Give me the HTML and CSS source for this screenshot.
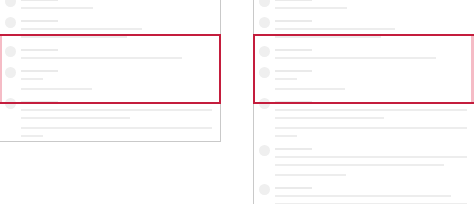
FILE: index.html
```html
<!DOCTYPE html>
<html>
<head>
<meta charset="utf-8">
<link rel="stylesheet" href="styles.css">
</head>
<body>
<div class="stage">
  <div class="panel panel-left">
    <div class="list">
      <div class="item"><div class="avatar"></div><div class="text">
        <div class="ln title"></div><div class="ln" style="width:72px"></div></div></div>
      <div class="item"><div class="avatar"></div><div class="text">
        <div class="ln title"></div><div class="ln" style="width:121px"></div><div class="ln" style="width:106px"></div></div></div>
      <div class="item"><div class="avatar"></div><div class="text">
        <div class="ln title"></div><div class="ln" style="width:161px"></div></div></div>
      <div class="item"><div class="avatar"></div><div class="text">
        <div class="ln title"></div><div class="ln" style="width:22px"></div><div class="ln para" style="width:71px"></div></div></div>
      <div class="item"><div class="avatar"></div><div class="text">
        <div class="ln title"></div><div class="ln" style="width:191px"></div><div class="ln" style="width:109px"></div><div class="ln para" style="width:191px"></div><div class="ln" style="width:22px"></div></div></div>
    </div>
    <div class="focus focus-left"></div>
  </div>
  <div class="panel panel-right">
    <div class="list">
      <div class="item"><div class="avatar"></div><div class="text">
        <div class="ln title"></div><div class="ln" style="width:72px"></div></div></div>
      <div class="item"><div class="avatar"></div><div class="text">
        <div class="ln title"></div><div class="ln" style="width:120px"></div><div class="ln" style="width:106px"></div></div></div>
      <div class="item"><div class="avatar"></div><div class="text">
        <div class="ln title"></div><div class="ln" style="width:161px"></div></div></div>
      <div class="item"><div class="avatar"></div><div class="text">
        <div class="ln title"></div><div class="ln" style="width:22px"></div><div class="ln para" style="width:70px"></div></div></div>
      <div class="item"><div class="avatar"></div><div class="text">
        <div class="ln title"></div><div class="ln" style="width:192px"></div><div class="ln" style="width:109px"></div><div class="ln para" style="width:192px"></div><div class="ln" style="width:22px"></div></div></div>
      <div class="item"><div class="avatar"></div><div class="text">
        <div class="ln title"></div><div class="ln" style="width:192px"></div><div class="ln" style="width:169px"></div><div class="ln para" style="width:71px"></div></div></div>
      <div class="item"><div class="avatar"></div><div class="text">
        <div class="ln title"></div><div class="ln" style="width:176px"></div><div class="ln" style="width:192px"></div></div></div>
    </div>
    <div class="focus focus-right"></div>
  </div>
</div>
</body>
</html>
```

FILE: styles.css
```css
html, body {
  margin: 0;
  padding: 0;
  background: #ffffff;
  width: 474px;
  height: 204px;
  overflow: hidden;
  font-family: "Liberation Sans", Arial, sans-serif;
}

.stage {
  display: flex;
  align-items: flex-start;
  gap: 32px;
  margin-left: -1px;
}

.panel {
  position: relative;
  flex: 0 0 auto;
  box-sizing: border-box;
  padding: 0 8px 4px 5px;
  background: #ffffff;
}

.panel-left {
  width: 222px;
  border-left: 1px solid #c9c9c9;
  border-right: 1px solid #c9c9c9;
  border-bottom: 1px solid #c9c9c9;
}

.panel-right {
  width: 230px;
  height: 260px;
  border-left: 1px solid #c9c9c9;
}

.list {
  margin-top: -4px;
  display: flex;
  flex-direction: column;
  gap: 8px;
}

.item {
  display: flex;
  align-items: flex-start;
  gap: 5px;
}

.avatar {
  flex: 0 0 11px;
  width: 11px;
  height: 11px;
  border-radius: 50%;
  background: #efefef;
}

.text {
  padding-top: 3px;
  display: flex;
  flex-direction: column;
  gap: 6px;
}

.ln {
  height: 2px;
  background: #ededed;
}

.ln.title {
  width: 37px;
  background: #eaeaea;
}

.ln.para {
  margin-top: 2px;
}

.focus {
  position: absolute;
  top: 34px;
  height: 66px;
  border: 2px solid #c41d3d;
  box-sizing: content-box;
}

.focus-left {
  left: -3px;
  width: 220px;
  box-shadow: inset 3px 0 0 #f5bcc6;
}

.focus-right {
  left: -1px;
  width: 219px;
  box-shadow: inset -3px 0 0 #f5bcc6;
}
```
